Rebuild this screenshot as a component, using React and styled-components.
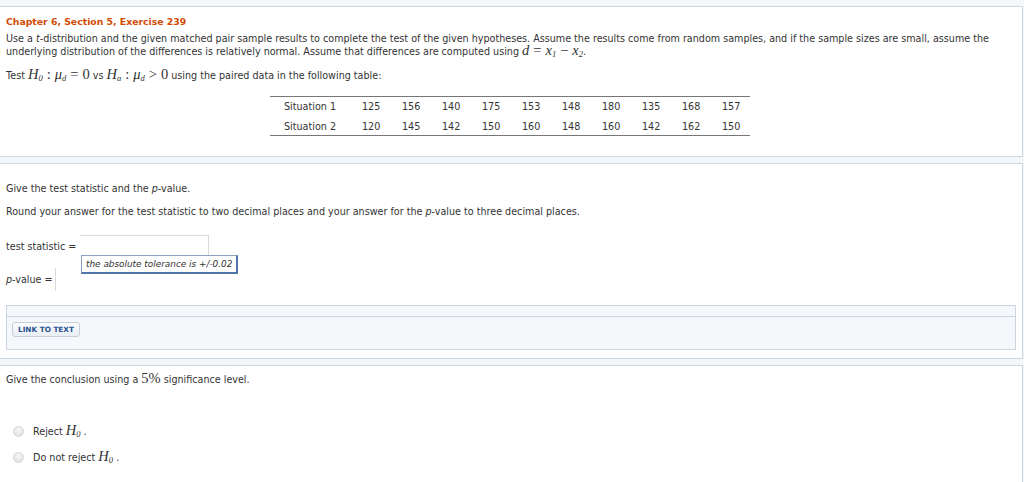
import React from 'react';
import styled, { createGlobalStyle } from 'styled-components';

const GlobalStyle = createGlobalStyle`
  body {
    margin: 0;
    background: #f4f7fa;
    font-family: "DejaVu Sans", Verdana, sans-serif;
    font-size: 9.6px;
    color: #333;
  }
`;

const Page = styled.div`
  padding: 6px 1px 0 0;
  display: flex;
  flex-direction: column;
  gap: 6px;
`;

const Panel = styled.div`
  background: #fff;
  border: 1px solid #cdd6e0;
  border-left: none;
  padding: ${p => p.$pad || '0 6px'};
  height: ${p => p.$h || 'auto'};
  box-sizing: border-box;
`;

const Title = styled.div`
  color: #d14b04;
  font-weight: bold;
  font-size: 9.3px;
  line-height: 13px;
  margin-bottom: 4px;
`;

const Para = styled.p`
  margin: 0;
  line-height: 13px;
  margin-bottom: ${p => p.$mb || '0'};
`;

const M = styled.span`
  font-family: "Liberation Serif", "Times New Roman", serif;
  font-style: ${p => (p.$up ? 'normal' : 'italic')};
  font-size: 14.5px;
  line-height: 0;
  padding: ${p => (p.$rel ? '0 4px' : '0')};
`;

const Sub = styled.sub`
  font-size: 8.5px;
  line-height: 0;
  vertical-align: -2px;
`;

const TableWrap = styled.div`
  margin: 14px 0 0 264px;
  width: 480px;
  border-top: 1px solid #777;
  border-bottom: 1px solid #777;
  display: flex;
  flex-direction: column;
  gap: 2px;
`;

const Row = styled.div`
  display: grid;
  grid-template-columns: 92px repeat(9, 40px) 28px;
  height: 18px;
  align-items: center;
`;

const Cell = styled.div`
  padding-left: ${p => (p.$first ? '14px' : '0')};
`;

const AnswerRow = styled.div`
  display: flex;
  align-items: center;
  height: 24px;
  margin-top: ${p => p.$mt || '0'};
  position: relative;
`;

const Input = styled.div`
  width: 129px;
  height: 23px;
  margin-left: 4px;
  border-top: 1px solid #dadada;
  border-right: 1px solid #dadada;
  box-sizing: border-box;
`;

const PInput = styled.div`
  width: 120px;
  height: 23px;
  margin-left: 2px;
  border-left: 1px solid #dadada;
`;

const Tooltip = styled.div`
  position: absolute;
  left: 75px;
  top: 21px;
  background: #fff;
  border: 1px solid #8aa2c0;
  border-right: 2px solid #4f76a8;
  border-bottom: 2px solid #4f76a8;
  font-style: italic;
  font-size: 8.9px;
  padding: 3px 4px 3px;
  white-space: nowrap;
  z-index: 2;
`;

const LinkBox = styled.div`
  background: #f5f8fb;
  border: 1px solid #ccd5df;
  height: 45px;
  margin-top: 14px;
  box-sizing: border-box;
`;

const LinkHead = styled.div`
  height: 10px;
  border-bottom: 1px solid #ccd5df;
`;

const LinkButton = styled.button`
  margin: 5px 0 0 5px;
  padding: 0 5px;
  height: 15px;
  border: 1px solid #c6cfd9;
  border-radius: 3px;
  background: linear-gradient(#fbfcfd, #e9eef3);
  color: #2a5290;
  font-family: "DejaVu Sans", Verdana, sans-serif;
  font-weight: bold;
  font-size: 7.3px;
`;

const Options = styled.div`
  margin-top: 36px;
  display: flex;
  flex-direction: column;
  gap: 8px;
  padding-left: 7px;
`;

const Option = styled.label`
  display: flex;
  align-items: center;
  gap: 9px;
  height: 18px;
`;

const Radio = styled.span`
  width: 11px;
  height: 11px;
  border-radius: 50%;
  border: 1px solid #d6d6d6;
  background: radial-gradient(circle at 50% 35%, #f7f7f7, #dcdcdc);
  box-sizing: border-box;
`;

const row1 = [125, 156, 140, 175, 153, 148, 180, 135, 168, 157];
const row2 = [120, 145, 142, 150, 160, 148, 160, 142, 162, 150];

const H0 = () => (
  <M>H<Sub>0</Sub></M>
);

export default function App() {
  return (
    <>
      <GlobalStyle />
      <Page>
        <Panel $pad="8px 6px 0" $h="151px">
          <Title>Chapter 6, Section 5, Exercise 239</Title>
          <Para $mb="11px">
            Use a <i>t</i>-distribution and the given matched pair sample results to complete the test of the given hypotheses. Assume the results come from random samples, and if the sample sizes are small, assume the<br />
            underlying distribution of the differences is relatively normal. Assume that differences are computed using <M>d</M><M $up $rel>=</M><M>x<Sub>1</Sub></M><M $up $rel>−</M><M>x<Sub>2</Sub></M>.
          </Para>
          <Para>
            Test <H0 /><M $up $rel>:</M><M>μ<Sub>d</Sub></M><M $up $rel>=</M><M $up>0</M> vs <M>H<Sub>a</Sub></M><M $up $rel>:</M><M>μ<Sub>d</Sub></M><M $up $rel>&gt;</M><M $up>0</M> using the paired data in the following table:
          </Para>
          <TableWrap>
            <Row>
              <Cell $first>Situation 1</Cell>
              {row1.map((v, i) => <Cell key={i}>{v}</Cell>)}
            </Row>
            <Row>
              <Cell $first>Situation 2</Cell>
              {row2.map((v, i) => <Cell key={i}>{v}</Cell>)}
            </Row>
          </TableWrap>
        </Panel>

        <Panel $pad="18px 6px 8px" $h="196px">
          <Para $mb="10px">Give the test statistic and the <i>p</i>-value.</Para>
          <Para $mb="16px">Round your answer for the test statistic to two decimal places and your answer for the <i>p</i>-value to three decimal places.</Para>
          <AnswerRow>
            test statistic = <Input />
            <Tooltip>the absolute tolerance is +/-0.02</Tooltip>
          </AnswerRow>
          <AnswerRow $mt="9px">
            <i>p</i>-value = <PInput />
          </AnswerRow>
          <LinkBox>
            <LinkHead />
            <LinkButton>LINK TO TEXT</LinkButton>
          </LinkBox>
        </Panel>

        <Panel $pad="7px 6px 0" $h="130px">
          <Para>Give the conclusion using a <M $up>5%</M> significance level.</Para>
          <Options>
            <Option><Radio /><span>Reject <H0 /> .</span></Option>
            <Option><Radio /><span>Do not reject <H0 /> .</span></Option>
          </Options>
        </Panel>
      </Page>
    </>
  );
}
